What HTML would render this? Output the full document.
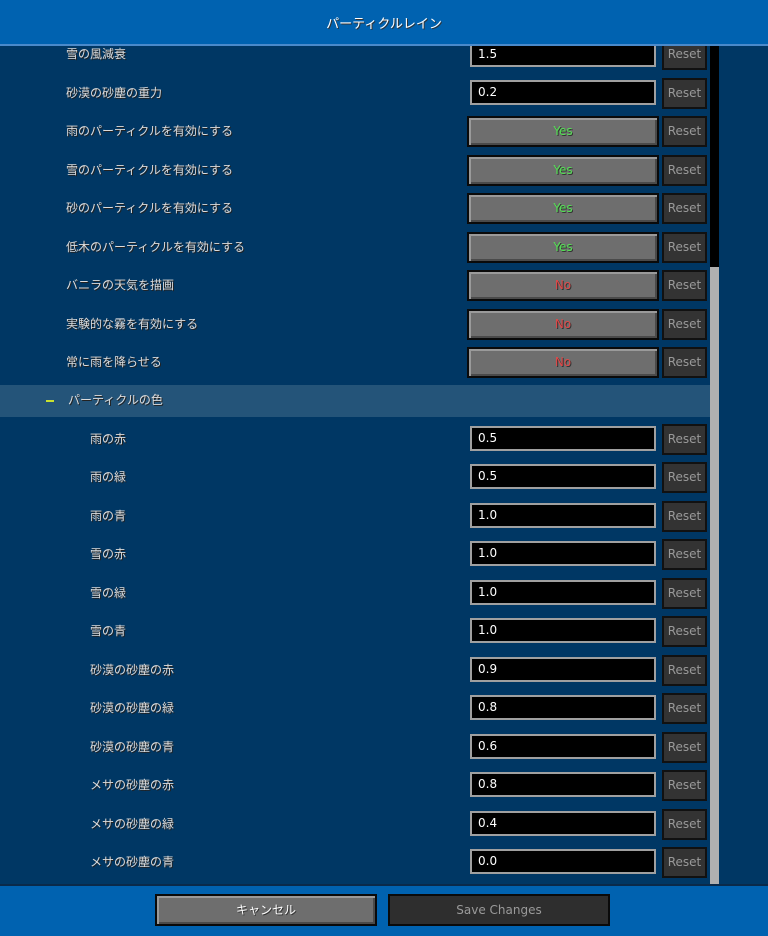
<!DOCTYPE html>
<html><head><meta charset="utf-8"><style>
*{margin:0;padding:0;box-sizing:border-box}
body{width:768px;height:936px;overflow:hidden;background:#003764;font-family:"DejaVu Sans","Noto Sans CJK JP",sans-serif;font-size:12px;color:#e0e0e0;position:relative}
.hdr{position:absolute;z-index:5;left:0;top:0;width:768px;height:46px;background:#0062b0;border-bottom:2px solid #4a8acb;color:#fff;text-align:center;line-height:50px;font-size:13px;text-shadow:1px 1px 0 #333}
.ftr{position:absolute;left:0;top:884px;width:768px;height:52px;background:#0062b0;border-top:2px solid #0a2a4a}
.lbl{position:absolute;left:66px;height:20px;line-height:20px;color:#dcdcdc;text-shadow:1px 1px 0 #222}
.lbl.sub{left:90px}
.tf{position:absolute;left:470px;width:186px;height:25px;background:#000;border:2px solid #a0a0a0;color:#fff;font-size:12px;line-height:21px;padding-left:6px}
.rs{position:absolute;left:662px;width:45px;height:31px;background:#333;border:2px solid #111;color:#999;text-align:center;line-height:27px;font-size:12px}
.tg{position:absolute;left:467px;width:192px;height:31px;background:#6e6e6e;border:2px solid #0a0a0a;box-shadow:inset 2px 2px 0 #9a9a9a,inset -2px -2px 0 #4a4a4a;text-align:center;line-height:27px;font-size:12px;text-shadow:1px 1px 0 #333}
.yes{color:#55e055}.no{color:#e04848}
.cat{position:absolute;left:0;top:385px;width:710px;height:32px;background:#245479}
.sb1{position:absolute;left:710px;top:46px;width:9px;height:221px;background:#000}
.sb2{position:absolute;left:710px;top:267px;width:9px;height:617px;background:#b0b0b0}
.btn{position:absolute;top:894px;width:222px;height:32px;border:2px solid #0a0a0a;text-align:center;line-height:28px;font-size:12px}
</style></head><body>
<div class="hdr">パーティクルレイン</div>
<div class="cat"><span style="position:absolute;left:46px;top:15px;width:8px;height:2px;background:#c8e030"></span><span style="position:absolute;left:68px;top:6px;color:#dcdcdc;text-shadow:1px 1px 0 #222">パーティクルの色</span></div>

<div class="lbl" style="top:44px">雪の風減衰</div><div class="tf" style="top:42px">1.5</div><div class="rs" style="top:39px">Reset</div>
<div class="lbl" style="top:83px">砂漠の砂塵の重力</div><div class="tf" style="top:80px">0.2</div><div class="rs" style="top:78px">Reset</div>
<div class="lbl" style="top:121px">雨のパーティクルを有効にする</div><div class="tg yes" style="top:116px">Yes</div><div class="rs" style="top:116px">Reset</div>
<div class="lbl" style="top:160px">雪のパーティクルを有効にする</div><div class="tg yes" style="top:155px">Yes</div><div class="rs" style="top:155px">Reset</div>
<div class="lbl" style="top:198px">砂のパーティクルを有効にする</div><div class="tg yes" style="top:193px">Yes</div><div class="rs" style="top:193px">Reset</div>
<div class="lbl" style="top:237px">低木のパーティクルを有効にする</div><div class="tg yes" style="top:232px">Yes</div><div class="rs" style="top:232px">Reset</div>
<div class="lbl" style="top:275px">バニラの天気を描画</div><div class="tg no" style="top:270px">No</div><div class="rs" style="top:270px">Reset</div>
<div class="lbl" style="top:314px">実験的な霧を有効にする</div><div class="tg no" style="top:309px">No</div><div class="rs" style="top:309px">Reset</div>
<div class="lbl" style="top:352px">常に雨を降らせる</div><div class="tg no" style="top:347px">No</div><div class="rs" style="top:347px">Reset</div>

<div class="lbl sub" style="top:429px">雨の赤</div><div class="tf" style="top:426px">0.5</div><div class="rs" style="top:424px">Reset</div>
<div class="lbl sub" style="top:467px">雨の緑</div><div class="tf" style="top:464px">0.5</div><div class="rs" style="top:462px">Reset</div>
<div class="lbl sub" style="top:506px">雨の青</div><div class="tf" style="top:503px">1.0</div><div class="rs" style="top:501px">Reset</div>
<div class="lbl sub" style="top:544px">雪の赤</div><div class="tf" style="top:541px">1.0</div><div class="rs" style="top:539px">Reset</div>
<div class="lbl sub" style="top:583px">雪の緑</div><div class="tf" style="top:580px">1.0</div><div class="rs" style="top:578px">Reset</div>
<div class="lbl sub" style="top:621px">雪の青</div><div class="tf" style="top:618px">1.0</div><div class="rs" style="top:616px">Reset</div>
<div class="lbl sub" style="top:660px">砂漠の砂塵の赤</div><div class="tf" style="top:657px">0.9</div><div class="rs" style="top:655px">Reset</div>
<div class="lbl sub" style="top:698px">砂漠の砂塵の緑</div><div class="tf" style="top:695px">0.8</div><div class="rs" style="top:693px">Reset</div>
<div class="lbl sub" style="top:737px">砂漠の砂塵の青</div><div class="tf" style="top:734px">0.6</div><div class="rs" style="top:732px">Reset</div>
<div class="lbl sub" style="top:775px">メサの砂塵の赤</div><div class="tf" style="top:772px">0.8</div><div class="rs" style="top:770px">Reset</div>
<div class="lbl sub" style="top:814px">メサの砂塵の緑</div><div class="tf" style="top:811px">0.4</div><div class="rs" style="top:809px">Reset</div>
<div class="lbl sub" style="top:852px">メサの砂塵の青</div><div class="tf" style="top:849px">0.0</div><div class="rs" style="top:847px">Reset</div>

<div class="sb1"></div><div class="sb2"></div>
<div class="ftr"></div>
<div class="btn" style="left:155px;background:#6e6e6e;box-shadow:inset 2px 2px 0 #9a9a9a,inset -2px -2px 0 #4a4a4a;color:#fff;text-shadow:1px 1px 0 #333">キャンセル</div>
<div class="btn" style="left:388px;background:#2e2e2e;color:#9a9a9a">Save Changes</div>
</body></html>
